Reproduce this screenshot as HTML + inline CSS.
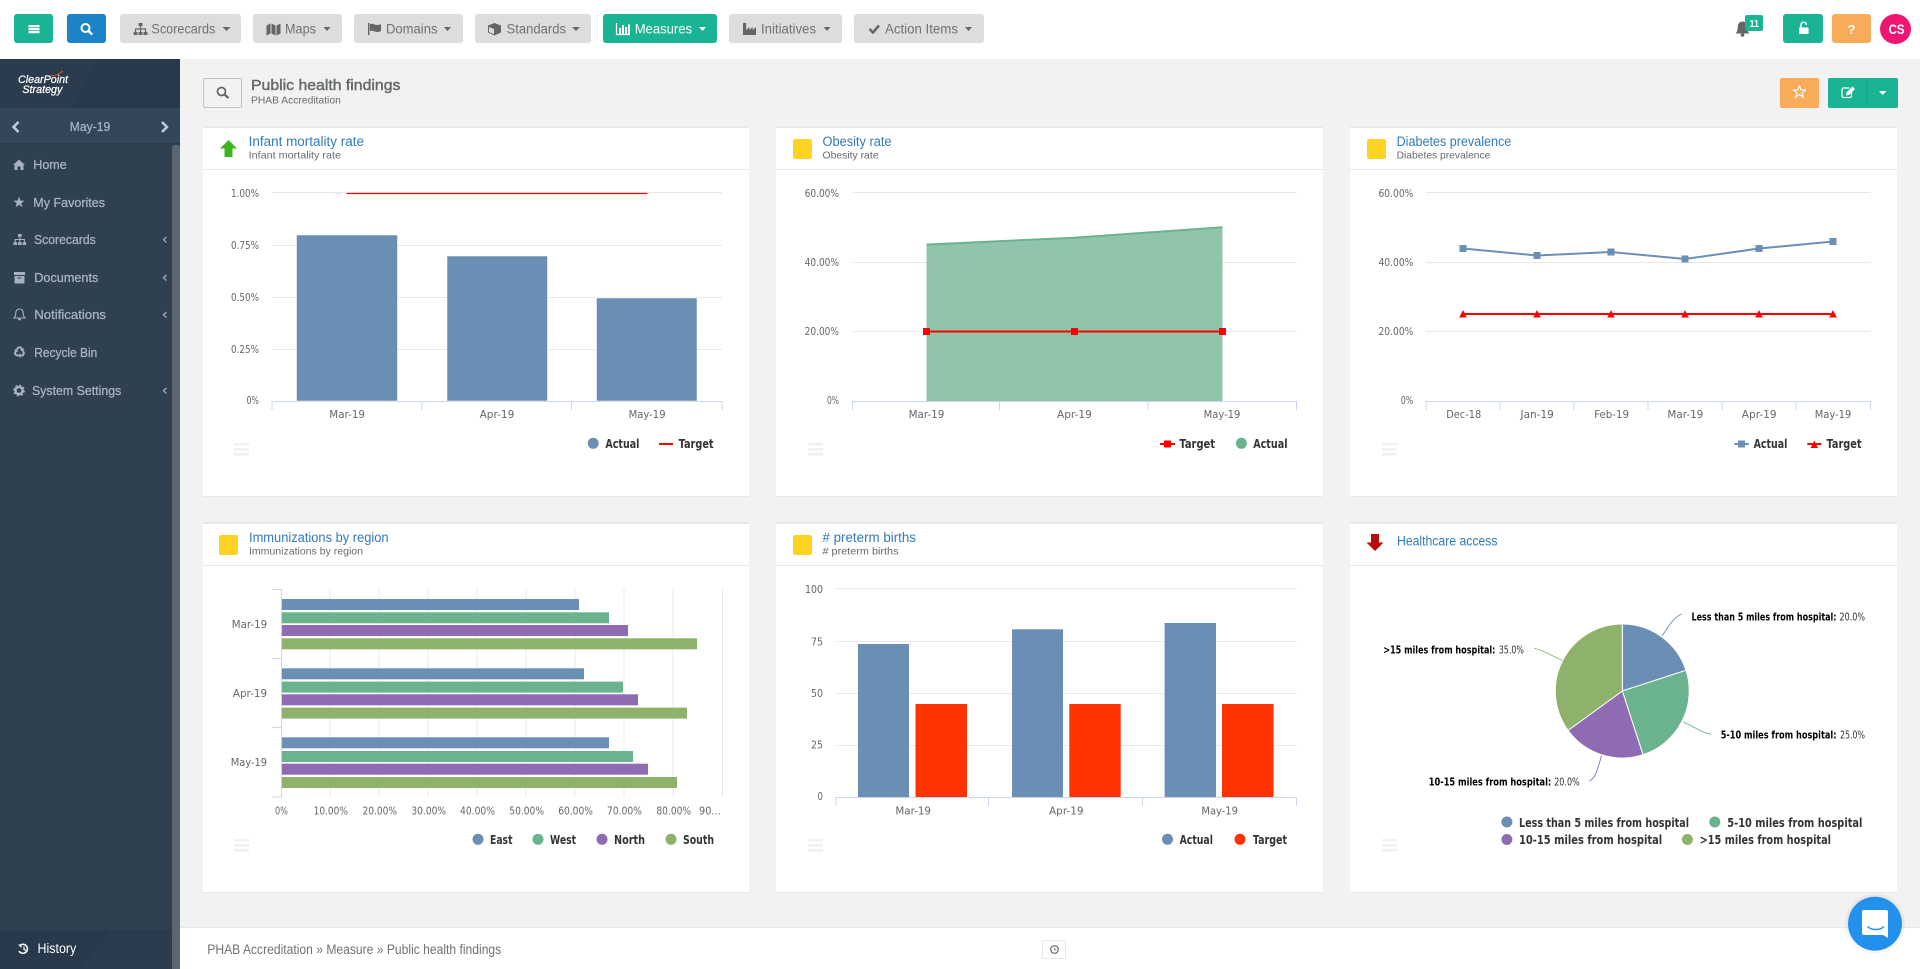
<!DOCTYPE html>
<html lang="en">
<head>
<meta charset="utf-8">
<title>Public health findings</title>
<style>
html,body{margin:0;padding:0;width:1920px;height:969px;overflow:hidden;background:#f2f2f2;font-family:"Liberation Sans",sans-serif}
.b{position:absolute;box-sizing:border-box}
.top{left:0;top:0;width:1920px;height:59px;background:#fff}
.btn{top:14px;height:29px;border-radius:3px;background:#ddd}
.teal{background:#1ab394}.org{background:#f8ac59}.blue{background:#1c84c6}
.side{left:0;top:59px;width:180px;height:910px;background:#2f4050}
.logo{left:0;top:59px;width:180px;height:49px;background:#27394a}
.date{left:0;top:108px;width:180px;height:36px;background:#33465a;border-bottom:1px solid #2a3a4a}
.hist{left:0;top:930px;width:180px;height:39px;background:#27394a}
.scroll{left:172px;top:145px;width:7.5px;height:824px;background:#5b6670;border-radius:3px 3px 0 0}
.foot{left:180px;top:927px;width:1740px;height:42px;background:#fff;border-top:1px solid #e7e7e7}
.card{background:#fff;border-top:2px solid #e7eaec;border-bottom:1px solid #e7e7e7;height:371px}
.card i{position:absolute;left:0;right:0;top:41px;height:1px;background:#e7e7e7;display:block}
.status{width:19px;height:20px;background:#ffd324;border-radius:2px}
svg.o{position:absolute;left:0;top:0;width:1920px;height:969px}
text{font-family:"Liberation Sans",sans-serif}
.n{font-size:13.5px;fill:#6f7274}
.w{font-size:13.5px;fill:#fff}
.m{font-size:13px;fill:#a7b1c2;stroke:#a7b1c2;stroke-width:.3}
.t{font-size:13.5px;fill:#337ab7}
.s{font-size:10.5px;fill:#676a6c}
.a{font-family:"DejaVu Sans",sans-serif;font-size:10.5px;fill:#666}
.l{font-family:"DejaVu Sans",sans-serif;font-size:12px;font-weight:bold;fill:#333}
.d{font-family:"DejaVu Sans",sans-serif;font-size:10.5px;font-weight:bold;fill:#000}
.v{font-family:"DejaVu Sans",sans-serif;font-size:10.5px;fill:#333}
.g{stroke:#e9e9e9;stroke-width:1;fill:none}
.x{stroke:#ccd6eb;stroke-width:1;fill:none}
</style>
</head>
<body>
<div class="b top"></div>
<div class="b btn teal" style="left:14px;width:39px"></div>
<div class="b btn blue" style="left:67px;width:39px"></div>
<div class="b btn" style="left:120px;width:121px"></div>
<div class="b btn" style="left:253px;width:89px"></div>
<div class="b btn" style="left:354px;width:109px"></div>
<div class="b btn" style="left:475px;width:116px"></div>
<div class="b btn teal" style="left:603px;width:114px"></div>
<div class="b btn" style="left:729px;width:113px"></div>
<div class="b btn" style="left:854px;width:130px"></div>
<div class="b btn teal" style="left:1783px;width:40px"></div>
<div class="b btn org" style="left:1832px;width:39px"></div>
<div class="b" style="left:1880px;top:14px;width:31px;height:30px;border-radius:50%;background:#ee1670"></div>

<div class="b side"></div>
<div class="b logo"></div>
<div class="b date"></div>
<div class="b hist"></div>
<div class="b scroll"></div>

<div class="b" style="left:203px;top:78px;width:39px;height:30px;border:1px solid #c2c2c2;border-radius:2px"></div>
<div class="b org" style="left:1780px;top:78px;width:39px;height:30px;border-radius:2px"></div>
<div class="b teal" style="left:1828px;top:78px;width:70px;height:30px;border-radius:2px"></div>
<div class="b" style="left:1866px;top:78px;width:1px;height:30px;background:#18a689"></div>

<div class="b card" style="left:203px;top:126px;width:546px"><i></i></div>
<div class="b card" style="left:776px;top:126px;width:547px"><i></i></div>
<div class="b card" style="left:1350px;top:126px;width:547px"><i></i></div>
<div class="b card" style="left:203px;top:522px;width:546px"><i></i></div>
<div class="b card" style="left:776px;top:522px;width:547px"><i></i></div>
<div class="b card" style="left:1350px;top:522px;width:547px"><i></i></div>

<div class="b status" style="left:793px;top:139px"></div>
<div class="b status" style="left:1367px;top:139px"></div>
<div class="b status" style="left:219px;top:535px"></div>
<div class="b status" style="left:793px;top:535px"></div>

<div class="b foot"></div>
<div class="b" style="left:1042px;top:940px;width:24px;height:19px;border:1px solid #e7e7e7;border-radius:2px;background:#fff"></div>

<svg class="o" viewBox="0 0 1920 969" xmlns="http://www.w3.org/2000/svg">
<defs>
<symbol id="sitemap" viewBox="0 0 14 12"><path d="M5 0h4v3H5zM0 9h4v3H0zM5 9h4v3H5zM10 9h4v3h-4z"/><path d="M7 3v6M2 9V6h10v3" fill="none" stroke="currentColor" stroke-width="1.2"/></symbol>
<symbol id="star" viewBox="-1 -1 2 2"><path d="M0-1 .24-.31H.95L.38.12.59.81 0 .38-.59.81-.38.12-.95-.31H-.24Z"/></symbol>
</defs>

<!-- top nav -->
<path d="M28.5 25h11v2.200h-11zM28.5 28h11v2.200h-11zM28.5 31h11v2.200h-11z" fill="#fff"/>
<circle cx="85.5" cy="28" r="4" fill="none" stroke="#fff" stroke-width="2"/><path d="M88.5 31l3.7 3.5" stroke="#fff" stroke-width="2.4"/>

<use href="#sitemap" x="133.5" y="23" width="14" height="12" fill="#666" color="#666"/>
<text class="n" x="151.4" y="33.5" textLength="64" lengthAdjust="spacingAndGlyphs">Scorecards</text>
<path d="M222.5 27h8l-4 4z" fill="#666"/>

<path d="M266.5 25.5l4-2v10l-4 2zM271.500 23.500l4 2v10l-4-2zM276.500 25.500l4-2v10l-4 2z" fill="#666"/>
<text class="n" x="285" y="33.500" textLength="31" lengthAdjust="spacingAndGlyphs">Maps</text>
<path d="M323.500 27h7l-3.500 4z" fill="#666"/>

<path d="M368 23h1.500v12H368z" fill="#666"/><path d="M370 24c3-1 5 1 7 1 1.500 0 3-.5 4-1v7c-1 .5-2.500 1-4 1-2 0-4-2-7-1z" fill="#666"/>
<text class="n" x="386" y="33.500" textLength="51.500" lengthAdjust="spacingAndGlyphs">Domains</text>
<path d="M444 27h7l-3.500 4z" fill="#666"/>

<path d="M494.500 23l6.500 2.500v7l-6.500 3-6.500-3v-7z" fill="#666"/><path d="M489 27l5 2v5.200l-5-2.200z" fill="#ddd"/>
<text class="n" x="506.500" y="33.500" textLength="59.500" lengthAdjust="spacingAndGlyphs">Standards</text>
<path d="M572 27h8l-4 4z" fill="#666"/>

<path d="M616.500 23v11.500H630" fill="none" stroke="#fff" stroke-width="1.200"/><path d="M619 28h2v6h-2zM622 25h2v9h-2zM625 27h2v7h-2zM628 24.500h1.800V34H628z" fill="#fff"/>
<text class="w" x="634.700" y="33.500" textLength="57.300" lengthAdjust="spacingAndGlyphs">Measures</text>
<path d="M699 27h7l-3.500 4z" fill="#fff"/>

<path d="M743 35V23h3.200v7l3.200-3v3l3.300-3v3l3.300-3v8z" fill="#666"/>
<text class="n" x="761" y="33.500" textLength="55" lengthAdjust="spacingAndGlyphs">Initiatives</text>
<path d="M823.500 27h7l-3.500 4z" fill="#666"/>

<path d="M869.500 29l3.500 3.500 6-7" fill="none" stroke="#666" stroke-width="2.500"/>
<text class="n" x="885" y="33.500" textLength="73" lengthAdjust="spacingAndGlyphs">Action Items</text>
<path d="M965 27h7l-3.500 4z" fill="#666"/>

<path d="M1742.500 21.500c-3.200 0-4.800 2.700-4.800 5.500 0 4-1 5.200-2.200 6.500h14c-1.200-1.300-2.200-2.500-2.200-6.500 0-2.800-1.600-5.500-4.800-5.500z" fill="#666"/><circle cx="1742.500" cy="35" r="1.800" fill="#666"/>
<rect x="1745" y="15" width="18" height="16" rx="2" fill="#1ab394"/>
<text x="1749.500" y="27" font-size="10" font-weight="bold" fill="#fff" textLength="9.500" lengthAdjust="spacingAndGlyphs">11</text>
<rect x="1799" y="27.500" width="9.600" height="6.500" rx=".8" fill="#fff"/><path d="M1801 27.500v-2.500a2.700 2.700 0 0 1 5.400 0" fill="none" stroke="#fff" stroke-width="1.500"/>
<text x="1851.500" y="34" font-size="13" font-weight="bold" fill="#fff" text-anchor="middle">?</text>
<text x="1888.600" y="34" font-size="14" font-weight="bold" fill="#fff" textLength="16" lengthAdjust="spacingAndGlyphs">CS</text>

<!-- sidebar -->
<path d="M0 59h100l-30 49H0z" fill="#2a3c4d"/>
<path d="M49 76Q57 76 63 71" fill="none" stroke="#e2582a" stroke-width="1"/>
<text x="18" y="83" font-size="11" font-style="italic" fill="#fff" stroke="#fff" stroke-width=".25" textLength="50" lengthAdjust="spacingAndGlyphs">ClearPoint</text>
<text x="22.400" y="93" font-size="11" font-style="italic" fill="#fff" stroke="#fff" stroke-width=".25" textLength="40" lengthAdjust="spacingAndGlyphs">Strategy</text>

<path d="M18.500 122l-5 5 5 5" fill="none" stroke="#c5cdd8" stroke-width="2.500"/>
<path d="M162 122l5 5-5 5" fill="none" stroke="#c5cdd8" stroke-width="2.500"/>
<text class="m" x="69.700" y="131" textLength="40.600" lengthAdjust="spacingAndGlyphs">May-19</text>

<path d="M19 159.500l6 5.500h-1.500v5h-3v-3.500h-3v3.500h-3v-5H13z" fill="#a7b1c2"/>
<text class="m" x="33.300" y="169" textLength="33.400" lengthAdjust="spacingAndGlyphs">Home</text>
<use href="#star" x="13" y="196.500" width="12" height="12" fill="#a7b1c2"/>
<text class="m" x="33.300" y="207" textLength="71.700" lengthAdjust="spacingAndGlyphs">My Favorites</text>
<use href="#sitemap" x="13.300" y="234" width="13" height="11" fill="#a7b1c2" color="#a7b1c2"/>
<text class="m" x="34" y="244" textLength="61.700" lengthAdjust="spacingAndGlyphs">Scorecards</text>
<path d="M14 272h11v3H14zM14.500 276h10v7.500h-10z" fill="#a7b1c2"/><path d="M17.500 278h4" stroke="#2f4050" stroke-width="1"/>
<text class="m" x="34.300" y="282" textLength="64" lengthAdjust="spacingAndGlyphs">Documents</text>
<path d="M19.500 309c-2.500 0-3.700 2-3.700 4 0 3-.8 4-1.800 5h11c-1-1-1.800-2-1.800-5 0-2-1.200-4-3.700-4z" fill="none" stroke="#a7b1c2" stroke-width="1.100"/><path d="M18 319.500h3" stroke="#a7b1c2" stroke-width="1.500"/>
<text class="m" x="34.300" y="319" textLength="71.700" lengthAdjust="spacingAndGlyphs">Notifications</text>
<g fill="#a7b1c2">
<path id="rc" d="M16.300 348.400l1.800-1.900h3.300l1.500 2.400 1.300-.8-.7 3.400-3.400-.7 1.200-.8-1-1.600h-1.400l-1 1.500z"/>
<path d="M16.300 348.400l1.800-1.900h3.300l1.500 2.400 1.300-.8-.7 3.400-3.400-.7 1.200-.8-1-1.600h-1.400l-1 1.500z" transform="rotate(120 19.500 352)"/>
<path d="M16.300 348.400l1.800-1.900h3.300l1.500 2.400 1.300-.8-.7 3.400-3.400-.7 1.200-.8-1-1.600h-1.400l-1 1.500z" transform="rotate(240 19.500 352)"/>
</g>
<text class="m" x="34.300" y="357" textLength="63" lengthAdjust="spacingAndGlyphs">Recycle Bin</text>
<circle cx="19" cy="390.500" r="3.600" fill="none" stroke="#a7b1c2" stroke-width="2.500"/><circle cx="19" cy="390.500" r="5" fill="none" stroke="#a7b1c2" stroke-width="1.800" stroke-dasharray="2 1.930"/>
<text class="m" x="32" y="395" textLength="89.300" lengthAdjust="spacingAndGlyphs">System Settings</text>
<path d="M166.500 237l-3 2.800 3 2.800M166.500 275l-3 2.800 3 2.800M166.500 312l-3 2.800 3 2.800M166.500 388l-3 2.800 3 2.800" fill="none" stroke="#a7b1c2" stroke-width="1.200"/>

<path d="M80 969l30-39h62v39z" fill="#2a3c4d"/>
<path d="M20.500 945a4.500 4.500 0 1 1-1.500 6" fill="none" stroke="#fff" stroke-width="1.600"/><path d="M18 944.500l3.500.2-.2 3.300z" fill="#fff"/><path d="M24 946.500v3l2 1" fill="none" stroke="#fff" stroke-width="1.200"/>
<text class="w" x="37.500" y="953" textLength="38.800" lengthAdjust="spacingAndGlyphs">History</text>

<!-- page header -->
<circle cx="221.500" cy="91.500" r="4" fill="none" stroke="#666" stroke-width="1.800"/><path d="M224.500 94.500l4 3.500" stroke="#666" stroke-width="2.200"/>
<text x="251" y="90" font-size="15" fill="#676a6c" stroke="#676a6c" stroke-width=".45" textLength="149.400" lengthAdjust="spacingAndGlyphs">Public health findings</text>
<text class="s" x="251" y="103.500" textLength="89.800" lengthAdjust="spacingAndGlyphs">PHAB Accreditation</text>
<use href="#star" x="1793" y="85.500" width="13" height="13" fill="none" stroke="#fff" stroke-width=".17"/>
<path d="M1851.500 92.500v3.500a1.500 1.500 0 0 1-1.500 1.500h-6.500a1.500 1.500 0 0 1-1.500-1.500v-6.500a1.500 1.500 0 0 1 1.500-1.500h6" fill="none" stroke="#fff" stroke-width="1.200"/>
<path d="M1846.500 92.500l6-6 2.500 2.500-6 6-3 .5z" fill="#fff"/>
<path d="M1879 91h7.500l-3.750 4z" fill="#fff"/>

<!-- card headers -->
<path d="M228.500 140l8.500 8.500h-4.500v8.500h-8v-8.500H220z" fill="#3cb521"/>
<text class="t" x="248.600" y="146" textLength="115.400" lengthAdjust="spacingAndGlyphs">Infant mortality rate</text>
<text class="s" x="248.600" y="158.500" textLength="92.400" lengthAdjust="spacingAndGlyphs">Infant mortality rate</text>
<text class="t" x="822.500" y="146" textLength="69" lengthAdjust="spacingAndGlyphs">Obesity rate</text>
<text class="s" x="822.500" y="158.500" textLength="56" lengthAdjust="spacingAndGlyphs">Obesity rate</text>
<text class="t" x="1396.600" y="146" textLength="114.700" lengthAdjust="spacingAndGlyphs">Diabetes prevalence</text>
<text class="s" x="1396.600" y="158.500" textLength="93.800" lengthAdjust="spacingAndGlyphs">Diabetes prevalence</text>
<text class="t" x="249" y="542" textLength="139.600" lengthAdjust="spacingAndGlyphs">Immunizations by region</text>
<text class="s" x="249" y="554.500" textLength="114" lengthAdjust="spacingAndGlyphs">Immunizations by region</text>
<text class="t" x="822.500" y="542" textLength="93.500" lengthAdjust="spacingAndGlyphs"># preterm births</text>
<text class="s" x="822.500" y="554.500" textLength="76" lengthAdjust="spacingAndGlyphs"># preterm births</text>
<path d="M1375 551l8.500-8.500H1379V534h-8v8.500h-4.500z" fill="#b50c0c"/>
<text class="t" x="1397" y="545.500" textLength="100.500" lengthAdjust="spacingAndGlyphs">Healthcare access</text>

<!-- drag handles -->
<path d="M234 443h15v2.500h-15zM234 448h15v2.500h-15zM234 453h15v2.500h-15zM808 443h15v2.500h-15zM808 448h15v2.500h-15zM808 453h15v2.500h-15zM1382 443h15v2.500h-15zM1382 448h15v2.500h-15zM1382 453h15v2.500h-15zM234 839h15v2.500h-15zM234 844h15v2.500h-15zM234 849h15v2.500h-15zM808 839h15v2.500h-15zM808 844h15v2.500h-15zM808 849h15v2.500h-15zM1382 839h15v2.500h-15zM1382 844h15v2.500h-15zM1382 849h15v2.500h-15z" fill="#f0f0f0"/>

<!-- chart 1 -->
<path class="g" d="M272 192.500h450M272 245.500h450M272 297.500h450M272 349.500h450"/>
<path class="x" d="M272 401.500h450M272 401v9M422 401v9M571.500 401v9M722 401v9"/>
<rect x="296.500" y="235" width="101" height="166" fill="#6b8eb4" stroke="#fff" stroke-width=".5"/>
<rect x="447" y="256" width="100.500" height="145" fill="#6b8eb4" stroke="#fff" stroke-width=".5"/>
<rect x="596.500" y="298" width="100.500" height="103" fill="#6b8eb4" stroke="#fff" stroke-width=".5"/>
<path d="M346.500 193.500h301" stroke="#f00" stroke-width="1.200"/>
<text class="a" x="231" y="197" textLength="28" lengthAdjust="spacingAndGlyphs">1.00%</text>
<text class="a" x="231" y="249" textLength="28" lengthAdjust="spacingAndGlyphs">0.75%</text>
<text class="a" x="231" y="301" textLength="28" lengthAdjust="spacingAndGlyphs">0.50%</text>
<text class="a" x="231" y="353" textLength="28" lengthAdjust="spacingAndGlyphs">0.25%</text>
<text class="a" x="246.500" y="404" textLength="12.500" lengthAdjust="spacingAndGlyphs">0%</text>
<text class="a" x="329.300" y="418" textLength="35.700" lengthAdjust="spacingAndGlyphs">Mar-19</text>
<text class="a" x="479.600" y="418" textLength="34.700" lengthAdjust="spacingAndGlyphs">Apr-19</text>
<text class="a" x="628.600" y="418" textLength="37" lengthAdjust="spacingAndGlyphs">May-19</text>
<circle cx="593.200" cy="443.300" r="5.500" fill="#6b8eb4"/>
<text class="l" x="605.400" y="448" textLength="34" lengthAdjust="spacingAndGlyphs">Actual</text>
<path d="M659 444h14" stroke="#f00" stroke-width="2"/>
<text class="l" x="678.600" y="448" textLength="35" lengthAdjust="spacingAndGlyphs">Target</text>

<!-- chart 2 -->
<path class="g" d="M852.500 192.500h444M852.500 262.500h444M852.500 331.500h444"/>
<path d="M926.500 244.600L1074.500 237.700 1222.500 227.200V401H926.500Z" fill="#6bb28e" fill-opacity=".75"/>
<path d="M926.500 244.600L1074.500 237.700 1222.500 227.200" fill="none" stroke="#6bb28e" stroke-width="2"/>
<path class="x" d="M852.500 401.500h444M852.500 401v9M999.500 401v9M1148 401v9M1296.500 401v9"/>
<path d="M926.500 331.500h296" stroke="#f00" stroke-width="2"/>
<path d="M923 328h7v7h-7zM1071 328h7v7h-7zM1219 328h7v7h-7z" fill="#f00"/>
<text class="a" x="804.600" y="197" textLength="34.400" lengthAdjust="spacingAndGlyphs">60.00%</text>
<text class="a" x="804.600" y="266" textLength="34.400" lengthAdjust="spacingAndGlyphs">40.00%</text>
<text class="a" x="804.600" y="335" textLength="34.400" lengthAdjust="spacingAndGlyphs">20.00%</text>
<text class="a" x="827" y="404" textLength="12" lengthAdjust="spacingAndGlyphs">0%</text>
<text class="a" x="908.600" y="418" textLength="35.700" lengthAdjust="spacingAndGlyphs">Mar-19</text>
<text class="a" x="1057" y="418" textLength="34.800" lengthAdjust="spacingAndGlyphs">Apr-19</text>
<text class="a" x="1203.600" y="418" textLength="36.800" lengthAdjust="spacingAndGlyphs">May-19</text>
<path d="M1160 444h15" stroke="#f00" stroke-width="2"/><rect x="1164" y="440.500" width="7" height="7" fill="#f00"/>
<text class="l" x="1179.400" y="448" textLength="35.600" lengthAdjust="spacingAndGlyphs">Target</text>
<circle cx="1241.400" cy="443.300" r="5.500" fill="#6bb28e"/>
<text class="l" x="1253.200" y="448" textLength="34.300" lengthAdjust="spacingAndGlyphs">Actual</text>

<!-- chart 3 -->
<path class="g" d="M1426 192.500h444.500M1426 262.500h444.500M1426 331.500h444.500"/>
<path class="x" d="M1426 401.500h444.500M1426 401v9M1500 401v9M1574 401v9M1648 401v9M1722 401v9M1796 401v9M1870.500 401v9"/>
<path d="M1463 248.500L1537 255.500 1611 252 1685 259 1759 248.500 1833 241.500" fill="none" stroke="#6b8eb4" stroke-width="2"/>
<path d="M1459.500 245h7v7h-7zM1533.500 252h7v7h-7zM1607.500 248.500h7v7h-7zM1681.500 255.500h7v7h-7zM1755.500 245h7v7h-7zM1829.500 238h7v7h-7z" fill="#6b8eb4"/>
<path d="M1463 314h370" stroke="#f00" stroke-width="2"/>
<path d="M1463 310l3.800 7.500h-7.600zM1537 310l3.800 7.500h-7.600zM1611 310l3.800 7.500h-7.600zM1685 310l3.800 7.500h-7.600zM1759 310l3.800 7.500h-7.600zM1833 310l3.800 7.500h-7.600z" fill="#f00"/>
<text class="a" x="1378.500" y="197" textLength="34.800" lengthAdjust="spacingAndGlyphs">60.00%</text>
<text class="a" x="1378.500" y="266" textLength="34.800" lengthAdjust="spacingAndGlyphs">40.00%</text>
<text class="a" x="1378.500" y="335" textLength="34.800" lengthAdjust="spacingAndGlyphs">20.00%</text>
<text class="a" x="1400.700" y="404" textLength="12.600" lengthAdjust="spacingAndGlyphs">0%</text>
<text class="a" x="1446.200" y="418" textLength="35" lengthAdjust="spacingAndGlyphs">Dec-18</text>
<text class="a" x="1520.500" y="418" textLength="33.300" lengthAdjust="spacingAndGlyphs">Jan-19</text>
<text class="a" x="1594.200" y="418" textLength="34.800" lengthAdjust="spacingAndGlyphs">Feb-19</text>
<text class="a" x="1667.400" y="418" textLength="35.900" lengthAdjust="spacingAndGlyphs">Mar-19</text>
<text class="a" x="1741.800" y="418" textLength="34.800" lengthAdjust="spacingAndGlyphs">Apr-19</text>
<text class="a" x="1814.700" y="418" textLength="36.600" lengthAdjust="spacingAndGlyphs">May-19</text>
<path d="M1734.400 444h14.400" stroke="#6b8eb4" stroke-width="2"/><rect x="1738" y="440.500" width="7" height="7" fill="#6b8eb4"/>
<text class="l" x="1753.600" y="448" textLength="33.700" lengthAdjust="spacingAndGlyphs">Actual</text>
<path d="M1807.300 444h14" stroke="#f00" stroke-width="2"/><path d="M1814.300 440.500l3.800 7.500h-7.600z" fill="#f00"/>
<text class="l" x="1826.500" y="448" textLength="35.100" lengthAdjust="spacingAndGlyphs">Target</text>

<!-- chart 4 -->
<path class="g" d="M330 589v208M379 589v208M428 589v208M477 589v208M526 589v208M575 589v208M624 589v208M673 589v208M722.500 589v208"/>
<path class="x" d="M281.500 589v208M272.500 589.500h9M272.500 658.500h9M272.500 727.500h9M272.500 797h9"/>
<g fill="#6b8eb4"><rect x="282" y="599" width="297" height="11"/><rect x="282" y="668.300" width="302" height="11"/><rect x="282" y="737.300" width="327" height="11"/></g>
<g fill="#6bb28e"><rect x="282" y="612.300" width="327" height="11"/><rect x="282" y="681.600" width="341" height="11"/><rect x="282" y="751" width="351" height="11"/></g>
<g fill="#8e6bb2"><rect x="282" y="625" width="346" height="11"/><rect x="282" y="694.300" width="356" height="11"/><rect x="282" y="763.700" width="366" height="11"/></g>
<g fill="#8eb26b"><rect x="282" y="638.300" width="415" height="11"/><rect x="282" y="707.600" width="405" height="11"/><rect x="282" y="777" width="395" height="11"/></g>
<text class="a" x="231.800" y="628" textLength="35.300" lengthAdjust="spacingAndGlyphs">Mar-19</text>
<text class="a" x="232.900" y="697" textLength="34.200" lengthAdjust="spacingAndGlyphs">Apr-19</text>
<text class="a" x="230.700" y="766" textLength="36.400" lengthAdjust="spacingAndGlyphs">May-19</text>
<text class="a" x="275" y="814.500" textLength="12.900" lengthAdjust="spacingAndGlyphs">0%</text>
<text class="a" x="313.600" y="814.500" textLength="34.300" lengthAdjust="spacingAndGlyphs">10.00%</text>
<text class="a" x="362.500" y="814.500" textLength="34.500" lengthAdjust="spacingAndGlyphs">20.00%</text>
<text class="a" x="411.400" y="814.500" textLength="34.600" lengthAdjust="spacingAndGlyphs">30.00%</text>
<text class="a" x="460" y="814.500" textLength="35" lengthAdjust="spacingAndGlyphs">40.00%</text>
<text class="a" x="509.300" y="814.500" textLength="34.700" lengthAdjust="spacingAndGlyphs">50.00%</text>
<text class="a" x="558.200" y="814.500" textLength="34.700" lengthAdjust="spacingAndGlyphs">60.00%</text>
<text class="a" x="607" y="814.500" textLength="35" lengthAdjust="spacingAndGlyphs">70.00%</text>
<text class="a" x="656.400" y="814.500" textLength="34.600" lengthAdjust="spacingAndGlyphs">80.00%</text>
<text class="a" x="699" y="814.500" textLength="21.700" lengthAdjust="spacingAndGlyphs">90...</text>
<circle cx="478" cy="839.300" r="5.500" fill="#6b8eb4"/><text class="l" x="490" y="844" textLength="22.500" lengthAdjust="spacingAndGlyphs">East</text>
<circle cx="538" cy="839.300" r="5.500" fill="#6bb28e"/><text class="l" x="550" y="844" textLength="26" lengthAdjust="spacingAndGlyphs">West</text>
<circle cx="602" cy="839.300" r="5.500" fill="#8e6bb2"/><text class="l" x="614" y="844" textLength="31" lengthAdjust="spacingAndGlyphs">North</text>
<circle cx="671" cy="839.300" r="5.500" fill="#8eb26b"/><text class="l" x="683" y="844" textLength="31" lengthAdjust="spacingAndGlyphs">South</text>

<!-- chart 5 -->
<path class="g" d="M836 588.500h460.500M836 641.500h460.500M836 693.500h460.500M836 745.500h460.500"/>
<path class="x" d="M836 797.500h460.500M836 797v9M988.500 797v9M1142.500 797v9M1296.500 797v9"/>
<g fill="#6b8eb4"><rect x="858" y="644" width="51" height="153"/><rect x="1012" y="629.300" width="51" height="167.700"/><rect x="1164.600" y="623" width="51.400" height="174"/></g>
<g fill="#ff3300"><rect x="915.500" y="704" width="51.500" height="93"/><rect x="1069.300" y="704" width="51.400" height="93"/><rect x="1222" y="704" width="51.600" height="93"/></g>
<text class="a" x="805" y="593" textLength="18" lengthAdjust="spacingAndGlyphs">100</text>
<text class="a" x="811" y="645.500" textLength="12" lengthAdjust="spacingAndGlyphs">75</text>
<text class="a" x="811" y="697" textLength="12" lengthAdjust="spacingAndGlyphs">50</text>
<text class="a" x="811" y="748.500" textLength="12" lengthAdjust="spacingAndGlyphs">25</text>
<text class="a" x="817.500" y="800" textLength="5.500" lengthAdjust="spacingAndGlyphs">0</text>
<text class="a" x="895.400" y="814.500" textLength="35.600" lengthAdjust="spacingAndGlyphs">Mar-19</text>
<text class="a" x="1049" y="814.500" textLength="34.600" lengthAdjust="spacingAndGlyphs">Apr-19</text>
<text class="a" x="1201.400" y="814.500" textLength="36.500" lengthAdjust="spacingAndGlyphs">May-19</text>
<circle cx="1167.500" cy="839.300" r="5.500" fill="#6b8eb4"/><text class="l" x="1179.600" y="844" textLength="33.300" lengthAdjust="spacingAndGlyphs">Actual</text>
<circle cx="1240" cy="839.300" r="5.500" fill="#ff3300"/><text class="l" x="1252.900" y="844" textLength="34.100" lengthAdjust="spacingAndGlyphs">Target</text>

<!-- chart 6 -->
<g stroke="#fff" stroke-width="1" stroke-linejoin="round">
<path d="M1622.300 691V624A67 67 0 0 1 1686 670.300Z" fill="#6b8eb4"/>
<path d="M1622.300 691L1686 670.300A67 67 0 0 1 1643 754.700Z" fill="#6bb28e"/>
<path d="M1622.300 691L1643 754.700A67 67 0 0 1 1568.100 730.400Z" fill="#8e6bb2"/>
<path d="M1622.300 691L1568.100 730.400A67 67 0 0 1 1622.300 624Z" fill="#8eb26b"/>
</g>
<path d="M1662 636C1670 624 1675 616 1682 614" fill="none" stroke="#6b8eb4" stroke-width=".9"/>
<path d="M1683 722C1695 727 1702 733 1711 734" fill="none" stroke="#6bb28e" stroke-width=".9"/>
<path d="M1601.600 755.700C1598 767 1596 778 1589.400 781" fill="none" stroke="#8e6bb2" stroke-width=".9"/>
<path d="M1562.300 660.300C1550 655 1543 650 1534.200 648.300" fill="none" stroke="#8eb26b" stroke-width=".9"/>
<text class="d" x="1691.500" y="620.500" textLength="145" lengthAdjust="spacingAndGlyphs">Less than 5 miles from hospital:</text>
<text class="v" x="1839.500" y="620.500" textLength="25.500" lengthAdjust="spacingAndGlyphs">20.0%</text>
<text class="d" x="1720.700" y="738.500" textLength="115.800" lengthAdjust="spacingAndGlyphs">5-10 miles from hospital:</text>
<text class="v" x="1840" y="738.500" textLength="25" lengthAdjust="spacingAndGlyphs">25.0%</text>
<text class="d" x="1428.800" y="785.500" textLength="122.400" lengthAdjust="spacingAndGlyphs">10-15 miles from hospital:</text>
<text class="v" x="1554.200" y="785.500" textLength="25.500" lengthAdjust="spacingAndGlyphs">20.0%</text>
<text class="d" x="1383.300" y="653.500" textLength="112.100" lengthAdjust="spacingAndGlyphs">&gt;15 miles from hospital:</text>
<text class="v" x="1498.700" y="653.500" textLength="25.300" lengthAdjust="spacingAndGlyphs">35.0%</text>
<circle cx="1506.900" cy="822" r="5.500" fill="#6b8eb4"/><text class="l" x="1519" y="827" textLength="170" lengthAdjust="spacingAndGlyphs">Less than 5 miles from hospital</text>
<circle cx="1714.800" cy="822" r="5.500" fill="#6bb28e"/><text class="l" x="1727.300" y="827" textLength="135.100" lengthAdjust="spacingAndGlyphs">5-10 miles from hospital</text>
<circle cx="1506.900" cy="839.500" r="5.500" fill="#8e6bb2"/><text class="l" x="1519" y="844" textLength="143.200" lengthAdjust="spacingAndGlyphs">10-15 miles from hospital</text>
<circle cx="1687.400" cy="839.500" r="5.500" fill="#8eb26b"/><text class="l" x="1699.600" y="844" textLength="131.400" lengthAdjust="spacingAndGlyphs">&gt;15 miles from hospital</text>

<!-- footer -->
<text class="n" x="207.300" y="954" font-size="12.500" textLength="293.900" lengthAdjust="spacingAndGlyphs">PHAB Accreditation » Measure » Public health findings</text>
<circle cx="1054.500" cy="949.500" r="3.800" fill="none" stroke="#666" stroke-width="1.200"/><path d="M1054.500 947.500v2.300h1.800" fill="none" stroke="#666" stroke-width=".8"/>

<!-- chat widget -->
<circle cx="1875" cy="923.700" r="30" fill="#000" opacity=".04"/>
<circle cx="1875" cy="923.700" r="27" fill="#2391ec"/>
<path d="M1864 910h22a2 2 0 0 1 2 2v26l-5-3h-19a2 2 0 0 1-2-2v-21a2 2 0 0 1 2-2z" fill="#fff"/>
<path d="M1867.500 926.500c4 4 12.500 4 16.500 0" fill="none" stroke="#2391ec" stroke-width="1.400"/>
</svg>
</body>
</html>
